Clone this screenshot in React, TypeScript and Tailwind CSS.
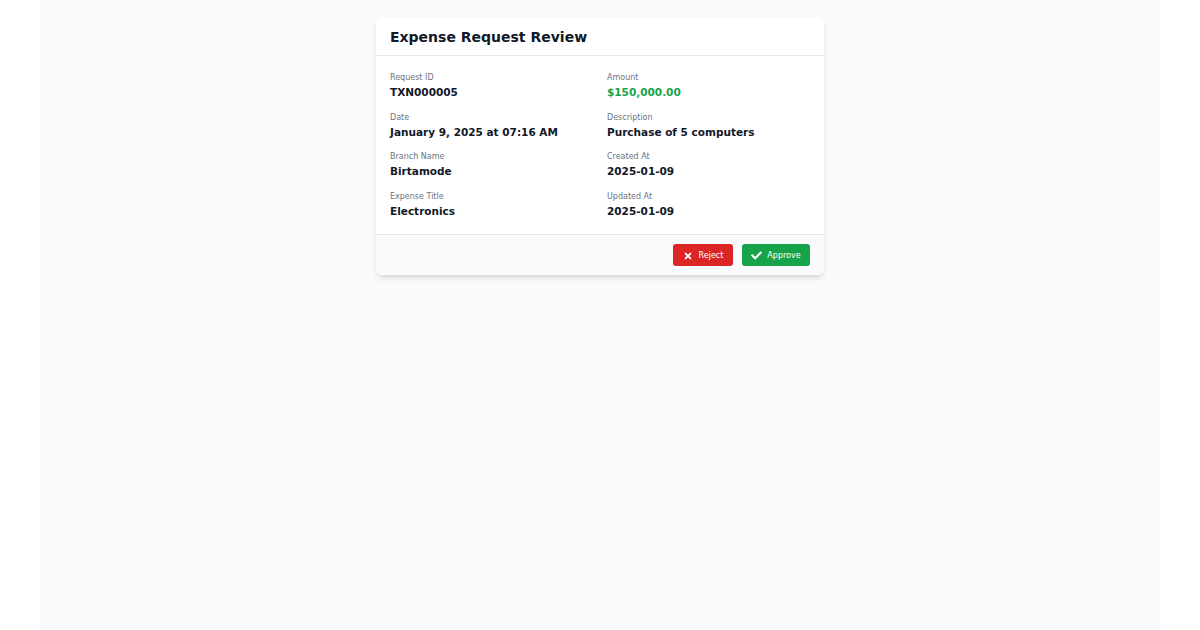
import { FaCheck, FaTimes } from 'react-icons/fa'

const fields = [
  { label: 'Request ID', value: 'TXN000005' },
  { label: 'Amount', value: '$150,000.00', accent: true },
  { label: 'Date', value: 'January 9, 2025 at 07:16 AM' },
  { label: 'Description', value: 'Purchase of 5 computers' },
  { label: 'Branch Name', value: 'Birtamode' },
  { label: 'Created At', value: '2025-01-09' },
  { label: 'Expense Title', value: 'Electronics' },
  { label: 'Updated At', value: '2025-01-09' },
]

export default function App() {
  return (
    <div className="min-h-screen bg-white" style={{ fontFamily: '"DejaVu Sans", sans-serif' }}>
      <div className="mx-10 min-h-[630px] bg-[#f9fafb] pt-[18px]">
        <div className="mx-auto w-[448px] overflow-hidden rounded-md bg-white shadow-md">
          <div className="border-b border-[#e5e7eb] px-[14px] pt-[10px] pb-[9px]">
            <h2 className="text-[14px] leading-[18px] font-bold text-[#111827]">Expense Request Review</h2>
          </div>

          <div className="grid grid-cols-2 gap-x-[14px] gap-y-[12.5px] px-[14px] pt-[16px] pb-[16.5px]">
            {fields.map((f) => (
              <div key={f.label} className="flex flex-col gap-[1px]">
                <span className="text-[8px] leading-[12px] text-[#6b7280]">{f.label}</span>
                <span
                  className={`text-[10.5px] leading-[14px] font-bold ${f.accent ? 'text-[#16a34a]' : 'text-[#111827]'}`}
                >
                  {f.value}
                </span>
              </div>
            ))}
          </div>

          <div className="flex justify-end gap-[9px] border-t border-[#e5e7eb] bg-[#f9fafb] px-[14px] py-[9px]">
            <button className="flex h-[22px] w-[60px] items-center justify-center gap-[6px] rounded-[3px] bg-[#dc2626] pt-[1px] text-[8px] text-white">
              <FaTimes size={10} />
              Reject
            </button>
            <button className="flex h-[22px] w-[68px] items-center justify-center gap-[5px] rounded-[3px] bg-[#16a34a] pt-[1px] text-[8px] text-white">
              <FaCheck size={11} />
              Approve
            </button>
          </div>
        </div>
      </div>
    </div>
  )
}
